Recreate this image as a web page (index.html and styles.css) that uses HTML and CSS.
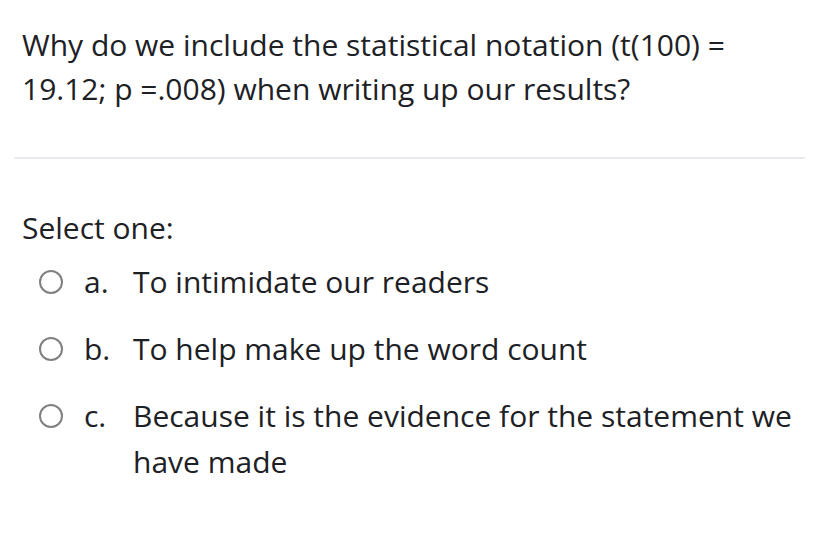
FILE: index.html
```html
<!DOCTYPE html>
<html>
<head>
<meta charset="utf-8">
<link rel="stylesheet" href="styles.css">
</head>
<body>
<div class="page">
  <div class="question">Why do we include the statistical notation (t(100) = 19.12; p =.008) when writing up our results?</div>
  <hr class="divider">
  <div class="prompt">Select one:</div>
  <div class="options">
    <div class="option"><span class="radio"></span><span class="letter">a.</span><span class="text">To intimidate our readers</span></div>
    <div class="option"><span class="radio"></span><span class="letter">b.</span><span class="text">To help make up the word count</span></div>
    <div class="option"><span class="radio"></span><span class="letter">c.</span><span class="text">Because it is the evidence for the statement we have made</span></div>
  </div>
</div>
</body>
</html>
```
FILE: styles.css
```css
html, body {
  margin: 0;
  padding: 0;
  background: #ffffff;
}
body {
  font-family: "Open Sans", "Noto Sans", sans-serif;
  font-size: 30px;
  line-height: 44px;
  color: #1d2125;
}
.page {
  padding: 23px 19px 0 14px;
}
.question {
  padding-left: 8px;
}
.divider {
  border: 0;
  border-top: 2px solid #e8e8ee;
  margin: 46px 0 0 0;
  height: 0;
}
.prompt {
  padding-left: 8px;
  margin-top: 47px;
}
.options {
  display: flex;
  flex-direction: column;
  gap: 21px;
  margin-top: 9px;
  line-height: 46px;
}
.option {
  display: flex;
  align-items: flex-start;
  padding-left: 25px;
}
.radio {
  flex: none;
  width: 20px;
  height: 20px;
  border: 2px solid #808080;
  border-radius: 50%;
  margin-top: 11px;
}
.letter {
  flex: none;
  width: 49px;
  margin-left: 21px;
}
.text {
  flex: 1;
}
```
